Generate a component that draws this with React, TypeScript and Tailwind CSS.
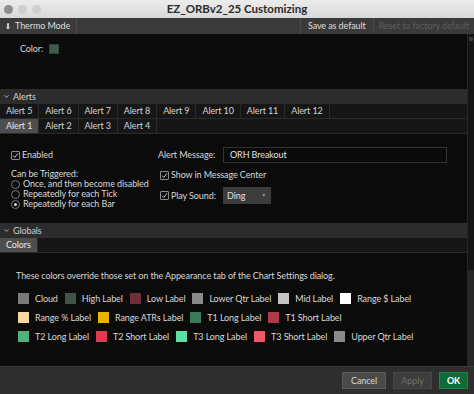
import { ChevronDown } from 'lucide-react';

const font = { fontFamily: '"Lato", "Liberation Sans", sans-serif' };

const alertRow1 = ['Alert 5', 'Alert 6', 'Alert 7', 'Alert 8', 'Alert 9', 'Alert 10', 'Alert 11', 'Alert 12'];
const alertRow2 = ['Alert 1', 'Alert 2', 'Alert 3', 'Alert 4'];

const colorRows = [
  [
    ['Cloud', 'bg-[#7a7a7a]'],
    ['High Label', 'bg-[#3f5548]'],
    ['Low Label', 'bg-[#6e2f3a]'],
    ['Lower Qtr Label', 'bg-[#8a8a8a]'],
    ['Mid Label', 'bg-[#c4c4c4]'],
    ['Range $ Label', 'bg-[#ffffff]'],
  ],
  [
    ['Range % Label', 'bg-[#f5d9a0]'],
    ['Range ATRs Label', 'bg-[#e8b400]'],
    ['T1 Long Label', 'bg-[#3a7a58]'],
    ['T1 Short Label', 'bg-[#b03a48]'],
  ],
  [
    ['T2 Long Label', 'bg-[#4fb07a]'],
    ['T2 Short Label', 'bg-[#e03a4c]'],
    ['T3 Long Label', 'bg-[#5de0a4]'],
    ['T3 Short Label', 'bg-[#f0566a]'],
    ['Upper Qtr Label', 'bg-[#8a8a8a]'],
  ],
];

function Check() {
  return (
    <span className="w-[9px] h-[9px] border border-[#8a8a8a] rounded-[1px] flex items-center justify-center shrink-0">
      <svg viewBox="0 0 10 10" className="w-[7px] h-[7px]">
        <path d="M1.5 5.2 L4 7.8 L8.6 1.8" fill="none" stroke="#d0d0d0" strokeWidth="1.3" />
      </svg>
    </span>
  );
}

function Radio({ on }: { on?: boolean }) {
  return (
    <span className="w-[9px] h-[9px] rounded-full border border-[#7a7a7a] flex items-center justify-center shrink-0">
      {on && <span className="w-[3px] h-[3px] rounded-full bg-[#d8d8d8]" />}
    </span>
  );
}

function SectionHeader({ label }: { label: string }) {
  return (
    <div className="h-[15px] bg-[#2c2c2c] flex items-center gap-[3px] pl-[3px] text-[9px] text-[#cfcfcf]">
      <ChevronDown size={7} strokeWidth={3} className="text-[#bbbbbb]" />
      {label}
    </div>
  );
}

function TabRow({ tabs, active }: { tabs: string[]; active?: string }) {
  return (
    <div className="h-[15px] flex bg-[#161616] border-b border-[#2a2a2a]">
      {tabs.map((t) => (
        <div
          key={t}
          className={`h-full flex items-center px-[6px] text-[9px] border-r border-[#2a2a2a] ${
            t === active ? 'bg-[#4e4e4e] text-[#e6e6e6]' : 'text-[#d4d4d4]'
          }`}
        >
          {t}
        </div>
      ))}
    </div>
  );
}

export default function App() {
  return (
    <div
      className="w-[474px] h-[394px] flex flex-col bg-[#0b0b0b] overflow-hidden whitespace-nowrap tracking-[-0.1px]"
      style={font}
    >
      {/* title bar */}
      <div className="h-[18px] flex items-center bg-gradient-to-b from-[#ececec] to-[#d9d9d9] px-[4px]">
        <div className="flex gap-[5px] w-[44px]">
          <span className="w-[9px] h-[9px] rounded-full bg-[#8e8e8e]" />
          <span className="w-[9px] h-[9px] rounded-full bg-[#cfcfcf]" />
          <span className="w-[9px] h-[9px] rounded-full bg-[#cfcfcf]" />
        </div>
        <div className="flex-1 text-center text-[11.5px] font-bold text-[#2a2a2a] tracking-normal">
          EZ_ORBv2_25 Customizing
        </div>
        <div className="w-[44px]" />
      </div>

      {/* toolbar */}
      <div className="h-[16px] flex items-center bg-[#3a3a3a] text-[9px]">
        <div className="h-full flex items-center gap-[5px] pl-[6px] pr-[6px] border-r border-[#4a4a4a] text-[#dedede]">
          <svg viewBox="0 0 6 10" className="w-[4px] h-[8px]">
            <rect x="1.5" y="0.5" width="3" height="6" rx="1.5" fill="#cfcfcf" />
            <circle cx="3" cy="7.5" r="2.2" fill="#cfcfcf" />
          </svg>
          Thermo Mode
        </div>
        <div className="flex-1" />
        <div className="h-full flex items-center px-[7px] border-l border-r border-[#4a4a4a] text-[#dedede]">
          Save as default
        </div>
        <div className="h-full flex items-center px-[5px] text-[#5e5e5e]">Reset to factory default</div>
      </div>

      {/* main */}
      <div className="flex-1 flex min-h-0">
        <div className="flex-1 flex flex-col">
          <div className="h-[55px] pl-[20px] pt-[9px] flex items-start gap-[6px] text-[9px] text-[#d8d8d8]">
            <span className="leading-[12px]">Color:</span>
            <span className="w-[10px] h-[10px] mt-[1px] bg-[#3d5a4a] border border-[#2e4438]" />
          </div>

          <SectionHeader label="Alerts" />
          <TabRow tabs={alertRow1} />
          <TabRow tabs={alertRow2} active="Alert 1" />

          <div className="h-[89px] flex text-[9px] text-[#d8d8d8]">
            <div className="w-[147px] pl-[11px] pt-[15px] flex flex-col">
              <div className="flex items-center gap-[2px] h-[12px]">
                <Check />
                Enabled
              </div>
              <div className="mt-[7px] h-[11px] leading-[11px]">Can be Triggered:</div>
              <div className="flex items-center gap-[3px] h-[10px]">
                <Radio />
                Once, and then become disabled
              </div>
              <div className="flex items-center gap-[3px] h-[10px]">
                <Radio />
                Repeatedly for each Tick
              </div>
              <div className="flex items-center gap-[3px] h-[10px]">
                <Radio on />
                Repeatedly for each Bar
              </div>
            </div>
            <div className="flex-1 pl-[11px] pt-[13px] flex flex-col">
              <div className="flex items-center h-[16px]">
                <span className="w-[65px]">Alert Message:</span>
                <div className="w-[224px] h-[16px] bg-[#0a0a0a] border border-[#333333] flex items-center pl-[6px] text-[#e0e0e0]">
                  ORH Breakout
                </div>
              </div>
              <div className="mt-[6px] flex items-center gap-[2px] h-[12px] pl-[2px]">
                <Check />
                Show in Message Center
              </div>
              <div className="mt-[6px] flex items-center h-[17px] pl-[2px]">
                <div className="flex items-center gap-[2px] w-[63px]">
                  <Check />
                  Play Sound:
                </div>
                <div className="w-[48px] h-[17px] bg-[#3c3c3c] flex items-center justify-between pl-[4px] pr-[5px] text-[#e0e0e0]">
                  Ding
                  <span className="text-[5px] text-[#9a9a9a]">▼</span>
                </div>
              </div>
            </div>
          </div>

          <SectionHeader label="Globals" />
          <TabRow tabs={['Colors']} active="Colors" />

          <div className="flex-1 pl-[16px] pt-[17px] text-[9px] text-[#d8d8d8]">
            <div className="h-[12px] leading-[12px]">
              These colors override those set on the Appearance tab of the Chart Settings dialog.
            </div>
            <div className="mt-[11px] pl-[2px] flex flex-col gap-[8px]">
              {colorRows.map((row, i) => (
                <div key={i} className="flex items-center gap-[7px] h-[11px]">
                  {row.map(([label, bg]) => (
                    <div key={label} className="flex items-center gap-[6px]">
                      <span className={`w-[11px] h-[11px] ${bg}`} />
                      {label}
                    </div>
                  ))}
                </div>
              ))}
            </div>
          </div>
        </div>

        {/* scrollbar */}
        <div className="w-[7px] bg-[#151515] border-l border-[#262626] flex flex-col">
          <div className="h-[4px] mt-[3px] mx-[1px] bg-[#3a3a3a]" />
          <div className="flex-1" />
          <div className="h-[96px] bg-[#262626]" />
        </div>
      </div>

      {/* footer */}
      <div className="h-[28px] bg-[#2e2e2e] border-t border-[#3a3a3a] flex items-center justify-end gap-[7px] pr-[6px] text-[9px]">
        <div className="w-[44px] h-[17px] bg-[#4a4a4a] border border-[#5a5a5a] flex items-center justify-center text-[#d8d8d8]">
          Cancel
        </div>
        <div className="w-[39px] h-[17px] bg-[#3d3d3d] border border-[#474747] flex items-center justify-center text-[#6e6e6e]">
          Apply
        </div>
        <div className="w-[29px] h-[17px] bg-[#0d6b37] border border-[#138a48] flex items-center justify-center font-bold text-white">
          OK
        </div>
      </div>
    </div>
  );
}
